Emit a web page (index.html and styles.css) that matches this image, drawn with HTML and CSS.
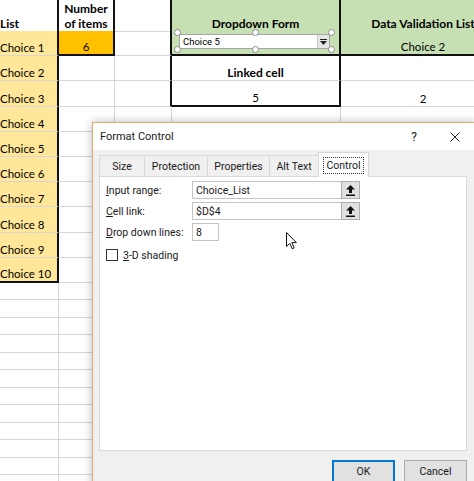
FILE: index.html
```html
<!DOCTYPE html>
<html lang="en">
  <head>
    <meta charset="UTF-8" />
    <title>Format Control</title>
    <link rel="stylesheet" href="styles.css">
  </head>
  <body>
    <div class="sheet">
      <div class="row head">
        <div class="cell a bold br">List</div>
        <div class="cell bold br">Number<br>of items</div>
        <div class="cell br"></div>
        <div class="cell green bold br">Dropdown Form</div>
        <div class="cell green bold">Data Validation List</div>
      </div>
      <div class="row tall">
        <div class="cell a yellow br">Choice 1</div>
        <div class="cell orange br bb">6</div>
        <div class="cell br"></div>
        <div class="cell green br bb"></div>
        <div class="cell green bb">Choice 2</div>
      </div>
      <div class="row tall">
        <div class="cell a yellow br">Choice 2</div>
        <div class="cell"></div>
        <div class="cell br"></div>
        <div class="cell bold br">Linked cell</div>
        <div class="cell"></div>
      </div>
      <div class="row tall">
        <div class="cell a yellow br">Choice 3</div>
        <div class="cell"></div>
        <div class="cell br"></div>
        <div class="cell br bb">5</div>
        <div class="cell">2</div>
      </div>
      <div class="row tall">
        <div class="cell a yellow br">Choice 4</div>
        <div class="cell"></div><div class="cell"></div><div class="cell"></div><div class="cell"></div>
      </div>
      <div class="row tall">
        <div class="cell a yellow br">Choice 5</div>
        <div class="cell"></div><div class="cell"></div><div class="cell"></div><div class="cell"></div>
      </div>
      <div class="row tall">
        <div class="cell a yellow br">Choice 6</div>
        <div class="cell"></div><div class="cell"></div><div class="cell"></div><div class="cell"></div>
      </div>
      <div class="row tall">
        <div class="cell a yellow br">Choice 7</div>
        <div class="cell"></div><div class="cell"></div><div class="cell"></div><div class="cell"></div>
      </div>
      <div class="row tall">
        <div class="cell a yellow br">Choice 8</div>
        <div class="cell"></div><div class="cell"></div><div class="cell"></div><div class="cell"></div>
      </div>
      <div class="row tall">
        <div class="cell a yellow br">Choice 9</div>
        <div class="cell"></div><div class="cell"></div><div class="cell"></div><div class="cell"></div>
      </div>
      <div class="row tall">
        <div class="cell a yellow br bb">Choice 10</div>
        <div class="cell"></div><div class="cell"></div><div class="cell"></div><div class="cell"></div>
      </div>
      <div class="row"><div class="cell"></div><div class="cell"></div><div class="cell"></div><div class="cell"></div><div class="cell"></div></div>
      <div class="row"><div class="cell"></div><div class="cell"></div><div class="cell"></div><div class="cell"></div><div class="cell"></div></div>
      <div class="row"><div class="cell"></div><div class="cell"></div><div class="cell"></div><div class="cell"></div><div class="cell"></div></div>
      <div class="row"><div class="cell"></div><div class="cell"></div><div class="cell"></div><div class="cell"></div><div class="cell"></div></div>
      <div class="row"><div class="cell"></div><div class="cell"></div><div class="cell"></div><div class="cell"></div><div class="cell"></div></div>
      <div class="row"><div class="cell"></div><div class="cell"></div><div class="cell"></div><div class="cell"></div><div class="cell"></div></div>
      <div class="row"><div class="cell"></div><div class="cell"></div><div class="cell"></div><div class="cell"></div><div class="cell"></div></div>
      <div class="row"><div class="cell"></div><div class="cell"></div><div class="cell"></div><div class="cell"></div><div class="cell"></div></div>
      <div class="row"><div class="cell"></div><div class="cell"></div><div class="cell"></div><div class="cell"></div><div class="cell"></div></div>
      <div class="row"><div class="cell"></div><div class="cell"></div><div class="cell"></div><div class="cell"></div><div class="cell"></div></div>
      <div class="row"><div class="cell"></div><div class="cell"></div><div class="cell"></div><div class="cell"></div><div class="cell"></div></div>
      <div class="row"><div class="cell"></div><div class="cell"></div><div class="cell"></div><div class="cell"></div><div class="cell"></div></div>

      <!-- form control: combo box, selected -->
      <div class="combo">
        <span class="combo-text">Choice 5</span>
        <span class="combo-btn">
          <svg width="7" height="6" viewBox="0 0 7 6"><rect x="0" y="0" width="7" height="1" fill="#222"/><path d="M0 2 H7 L3.5 6 Z" fill="#222"/></svg>
        </span>
        <i class="handle h-tl"></i><i class="handle h-tm"></i><i class="handle h-tr"></i>
        <i class="handle h-bl"></i><i class="handle h-bm"></i><i class="handle h-br"></i>
      </div>
    </div>

    <div class="dialog">
      <div class="titlebar">
        <span class="title">Format Control</span>
        <span class="help">?</span>
        <span class="close">
          <svg width="10" height="10" viewBox="0 0 10 10"><path d="M0.5 0.5 L9.5 9.5 M9.5 0.5 L0.5 9.5" stroke="#222" stroke-width="1"/></svg>
        </span>
      </div>
      <div class="tabs">
        <span class="tab t-size">Size</span>
        <span class="tab t-prot">Protection</span>
        <span class="tab t-prop">Properties</span>
        <span class="tab t-alt">Alt Text</span>
        <span class="tab t-ctrl active"><span class="focus">Control</span></span>
      </div>
      <div class="panel">
        <div class="fields">
          <span><u>I</u>nput range:</span>
          <div class="ref">
            <span class="field">Choice_List</span>
            <span class="pick"><svg width="9" height="11" viewBox="0 0 9 11"><path d="M4.5 0 L9 4.5 H6 V8 H3 V4.5 H0 Z" fill="#111"/><rect x="0" y="9.5" width="9" height="1.5" fill="#111"/></svg></span>
          </div>
          <span><u>C</u>ell link:</span>
          <div class="ref">
            <span class="field">$D$4</span>
            <span class="pick"><svg width="9" height="11" viewBox="0 0 9 11"><path d="M4.5 0 L9 4.5 H6 V8 H3 V4.5 H0 Z" fill="#111"/><rect x="0" y="9.5" width="9" height="1.5" fill="#111"/></svg></span>
          </div>
          <span><u>D</u>rop down lines:</span>
          <div class="ref">
            <span class="field short">8</span>
          </div>
        </div>
        <div class="check">
          <span class="box"></span>
          <span><u>3</u>-D shading</span>
        </div>
      </div>
      <div class="buttons">
        <button class="btn default">OK</button>
        <button class="btn">Cancel</button>
      </div>
    </div>

    <svg class="cursor" width="12" height="18" viewBox="0 0 12 18">
      <path d="M0.5 0.5 V14.5 L3.8 11.4 L6.2 16.8 L8.2 15.9 L5.9 10.6 H10.4 Z" fill="#fff" stroke="#111" stroke-width="1" stroke-linejoin="round"/>
    </svg>
  </body>
</html>
```

FILE: styles.css
```css
* {
  margin: 0;
  padding: 0;
  box-sizing: border-box;
}
body {
  width: 474px;
  height: 481px;
  overflow: hidden;
  position: relative;
  background: #fff;
  font-family: Lato, "Liberation Sans", sans-serif;
}

/*
  sheet grid
*/
.sheet {
  position: relative;
  width: 506px;
  font-size: 11.5px;
  color: #000;
}
.row {
  display: grid;
  grid-template-columns: 59px 56px 57px 169px 165px;
  height: 17.5px;
}
.row.head {
  height: 31px;
}
.row.tall {
  height: 25.2px;
}
.cell {
  display: flex;
  align-items: flex-end;
  justify-content: center;
  text-align: center;
  padding: 0 2px;
  line-height: 15px;
  white-space: nowrap;
  overflow: hidden;
  border-right: 1px solid #d6d6d6;
  border-bottom: 1px solid #d6d6d6;
}
.row.head .cell {
  line-height: 15px;
  padding-bottom: 0;
  margin-bottom: -1px;
}
.cell.a {
  justify-content: flex-start;
  padding-left: 0;
}
.bold {
  font-weight: 700;
  font-size: 12px;
}
.yellow {
  background: #ffe699;
}
.orange {
  background: #ffc000;
}
.green {
  background: #c6e0b4;
}
.br {
  border-right: 2px solid #111;
}
.bb {
  border-bottom: 2px solid #111;
}

/*
  combo box form control
*/
.combo {
  position: absolute;
  left: 179px;
  top: 34px;
  width: 151px;
  height: 15px;
  background: #fff;
  border: 1px solid #a6a6a6;
  display: flex;
  align-items: center;
  font-family: Roboto, sans-serif;
  font-size: 9.5px;
}
.combo-text {
  flex: 1;
  padding-left: 3px;
}
.combo-btn {
  width: 12px;
  height: 100%;
  background: #e6e6e6;
  border-left: 1px solid #c8c8c8;
  display: flex;
  align-items: center;
  justify-content: center;
}
.handle {
  position: absolute;
  width: 7px;
  height: 7px;
  border-radius: 50%;
  background: #fff;
  border: 1px solid #8a8a8a;
}
.h-tl, .h-tm, .h-tr {
  top: -6px;
}
.h-bl, .h-bm, .h-br {
  bottom: -5px;
}
.h-tl, .h-bl {
  left: -6px;
}
.h-tm, .h-bm {
  left: 72px;
}
.h-tr, .h-br {
  right: -6px;
}

/*
  dialog
*/
.dialog {
  position: absolute;
  left: 92px;
  top: 122px;
  width: 383px;
  height: 372px;
  background: #f0f0f0;
  border: 1px solid #eda867;
  box-shadow: 0 0 9px rgba(0, 0, 0, 0.28);
  font-family: Roboto, "Noto Sans", sans-serif;
  font-size: 10.5px;
  color: #1a1a1a;
}
.titlebar {
  display: flex;
  align-items: center;
  height: 27px;
  background: #fff;
  padding-left: 7px;
}
.title {
  flex: 1;
  font-size: 11px;
}
.help {
  width: 44px;
  text-align: center;
  font-size: 12px;
}
.close {
  width: 38px;
  display: flex;
  justify-content: center;
}
.tabs {
  display: flex;
  align-items: flex-end;
  height: 26px;
  padding-left: 6px;
}
.tab {
  height: 21px;
  border: 1px solid #d9d9d9;
  border-bottom: none;
  margin-right: -1px;
  display: flex;
  align-items: center;
  justify-content: center;
}
.t-size {
  width: 46px;
}
.t-prot {
  width: 64px;
}
.t-prop {
  width: 63px;
}
.t-alt {
  width: 50px;
}
.t-ctrl {
  width: 51px;
}
.tab.active {
  height: 25px;
  margin-bottom: -1px;
  padding-top: 1px;
  background: #fff;
  position: relative;
  z-index: 1;
}
.focus {
  border: 1px dotted #333;
  padding: 1px 2px;
}
.panel {
  height: 275px;
  margin: 0 7px 0 6px;
  padding: 4px 6px;
  background: #fff;
  border: 1px solid #d9d9d9;
}
.fields {
  display: grid;
  grid-template-columns: 86px auto;
  grid-auto-rows: 18px;
  row-gap: 3px;
  align-items: center;
}
.ref {
  display: flex;
}
.field {
  width: 150px;
  height: 18px;
  padding-left: 3px;
  display: flex;
  align-items: center;
  background: #fff;
  border: 1px solid #c4c4c4;
}
.field.short {
  width: 27px;
}
.pick {
  width: 19px;
  height: 18px;
  margin-left: -1px;
  display: flex;
  align-items: center;
  justify-content: center;
  background: #e1e1e1;
  border: 1px solid #adadad;
}
.check {
  display: flex;
  align-items: center;
  gap: 5px;
  height: 14px;
  margin-top: 7px;
}
.box {
  width: 12px;
  height: 12px;
  background: #fff;
  border: 1px solid #333;
}
.buttons {
  display: flex;
  justify-content: flex-end;
  gap: 9px;
  margin: 9px 7px 0 0;
}
.btn {
  width: 63px;
  height: 23px;
  font: inherit;
  color: #1a1a1a;
  background: #e1e1e1;
  border: 1px solid #adadad;
}
.btn.default {
  border: 2px solid #0078d7;
}

.cursor {
  position: absolute;
  left: 286px;
  top: 232px;
}
```
